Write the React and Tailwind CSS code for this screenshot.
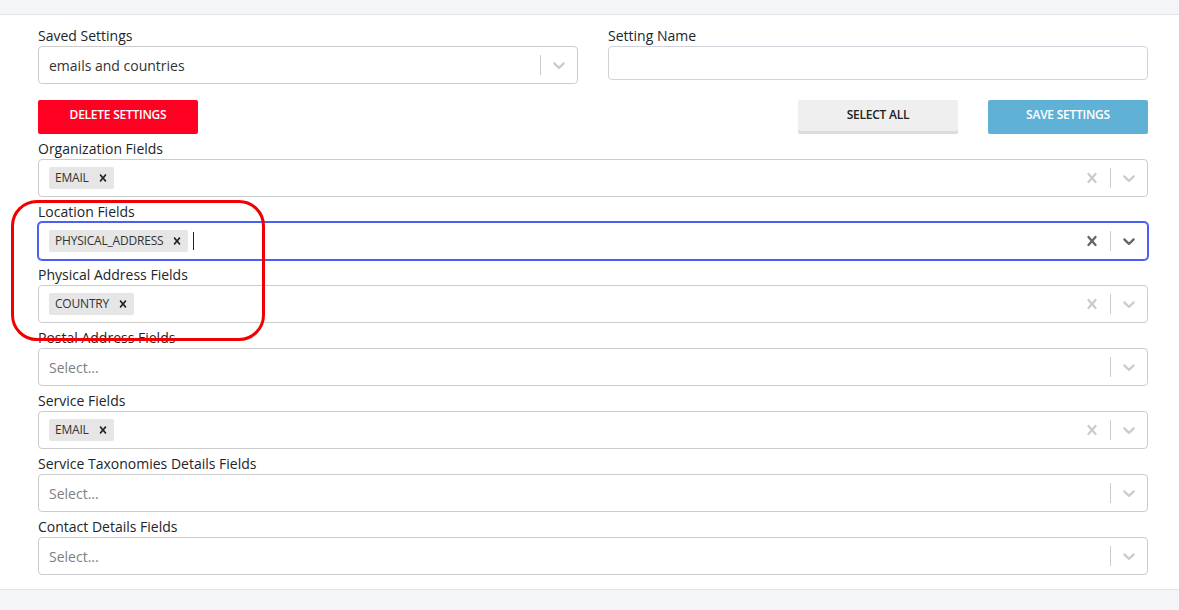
import React from 'react'

const font = { fontFamily: '"Open Sans", "Noto Sans", Arial, sans-serif' }

const CrossIcon = ({ className }) => (
    <svg viewBox="0 0 20 20" className={className} fill="currentColor" aria-hidden="true">
        <path d="M14.348 14.849c-0.469 0.469-1.229 0.469-1.697 0l-2.651-3.030-2.651 3.029c-0.469 0.469-1.229 0.469-1.697 0-0.469-0.469-0.469-1.229 0-1.697l2.758-3.15-2.759-3.152c-0.469-0.469-0.469-1.228 0-1.697s1.228-0.469 1.697 0l2.652 3.031 2.651-3.031c0.469-0.469 1.228-0.469 1.697 0s0.469 1.229 0 1.697l-2.758 3.152 2.758 3.15c0.469 0.469 0.469 1.229 0 1.698z" />
    </svg>
)

const ChevronIcon = ({ className }) => (
    <svg viewBox="0 0 20 20" className={className} fill="currentColor" aria-hidden="true">
        <path d="M4.516 7.548c0.436-0.446 1.043-0.481 1.576 0l3.908 3.747 3.908-3.747c0.533-0.481 1.141-0.446 1.574 0 0.436 0.445 0.408 1.197 0 1.615-0.406 0.418-4.695 4.502-4.695 4.502-0.217 0.223-0.502 0.335-0.787 0.335s-0.57-0.112-0.789-0.335c0 0-4.287-4.084-4.695-4.502s-0.436-1.17 0-1.615z" />
    </svg>
)

const Chip = ({ label }) => (
    <div className='m-[2px] flex items-center h-[22px] bg-[#e6e6e6] rounded-[2px]'>
        <span className='pl-[6px] pr-[3px] text-[12px] tracking-[-0.2px] text-[#333] leading-none'>{label}</span>
        <span className='px-[4px] flex items-center text-[#222]'><CrossIcon className='w-[14px] h-[14px]' /></span>
    </div>
)

const Select = ({ values = [], text, focused, clearable }) => {
    const iconColor = focused ? 'text-[#666]' : 'text-[#ccc]'
    return (
        <div className={`h-[38px] w-full bg-white rounded-[4px] flex items-center ${focused ? 'border border-[#4b5ef6] ring-1 ring-[#4b5ef6]' : 'border border-[#cccccc]'}`}>
            <div className='flex-1 flex items-center px-[8px] py-[2px] min-w-0'>
                {values.map((v) => <Chip key={v} label={v} />)}
                {text && <span className='mx-[2px] text-[14px] text-[#333]'>{text}</span>}
                {!values.length && !text && <span className='mx-[2px] text-[14px] text-[#808080]'>Select...</span>}
                {focused && <span className='ml-[3px] w-px h-[18px] bg-[#222]'></span>}
            </div>
            <div className='flex items-center h-full'>
                {clearable && values.length > 0 && (
                    <div className={`p-[8px] ${iconColor}`}><CrossIcon className='w-[20px] h-[20px]' /></div>
                )}
                <span className='w-px h-[20px] bg-[#ccc]'></span>
                <div className={`p-[8px] ${iconColor}`}><ChevronIcon className='w-[20px] h-[20px]' /></div>
            </div>
        </div>
    )
}

const Field = ({ label, children }) => (
    <div className='pt-[4px]'>
        <div className='text-[14px] leading-[21px] text-[#212529]'>{label}</div>
        {children}
    </div>
)

const btn = 'w-[160px] h-[34px] pb-[4px] text-[12px] font-semibold tracking-[-0.25px] rounded-[2px]'

export default function App() {
    return (
        <div style={font} className='w-[1179px] h-[610px] bg-[#f4f5f7] overflow-hidden'>
            <div className='h-[14px]'></div>
            <div className='relative bg-white border-y border-[#e3e4e6] h-[576px] pl-[38px] pr-[31px] pt-[10px]'>
                <div className='grid grid-cols-2 gap-x-[30px]'>
                    <div>
                        <div className='text-[14px] leading-[21px] text-[#212529]'>Saved Settings</div>
                        <Select text='emails and countries' />
                    </div>
                    <div>
                        <div className='text-[14px] leading-[21px] text-[#212529]'>Setting Name</div>
                        <input className='h-[34px] w-full border border-[#ced4da] rounded-[4px] outline-none' />
                    </div>
                </div>

                <div className='flex items-center mt-[16px] gap-[30px]'>
                    <button className={`${btn} bg-[#ff0022] text-white`}>DELETE SETTINGS</button>
                    <div className='flex-1'></div>
                    <button className={`${btn} bg-[#efefef] text-[#222] shadow-[inset_0_-3px_0_#dcdcdc]`}>SELECT ALL</button>
                    <button className={`${btn} bg-[#60b1d6] text-white`}>SAVE SETTINGS</button>
                </div>

                <Field label='Organization Fields'><Select values={['EMAIL']} clearable /></Field>
                <Field label='Location Fields'><Select values={['PHYSICAL_ADDRESS']} clearable focused /></Field>
                <Field label='Physical Address Fields'><Select values={['COUNTRY']} clearable /></Field>
                <Field label='Postal Address Fields'><Select /></Field>
                <Field label='Service Fields'><Select values={['EMAIL']} clearable /></Field>
                <Field label='Service Taxonomies Details Fields'><Select /></Field>
                <Field label='Contact Details Fields'><Select /></Field>

                {/* annotation ring drawn over the form */}
                <div className='absolute left-[11px] top-[185px] w-[254px] h-[141px] border-[3px] border-[#f00000] rounded-[26px] pointer-events-none'></div>
            </div>
        </div>
    )
}
